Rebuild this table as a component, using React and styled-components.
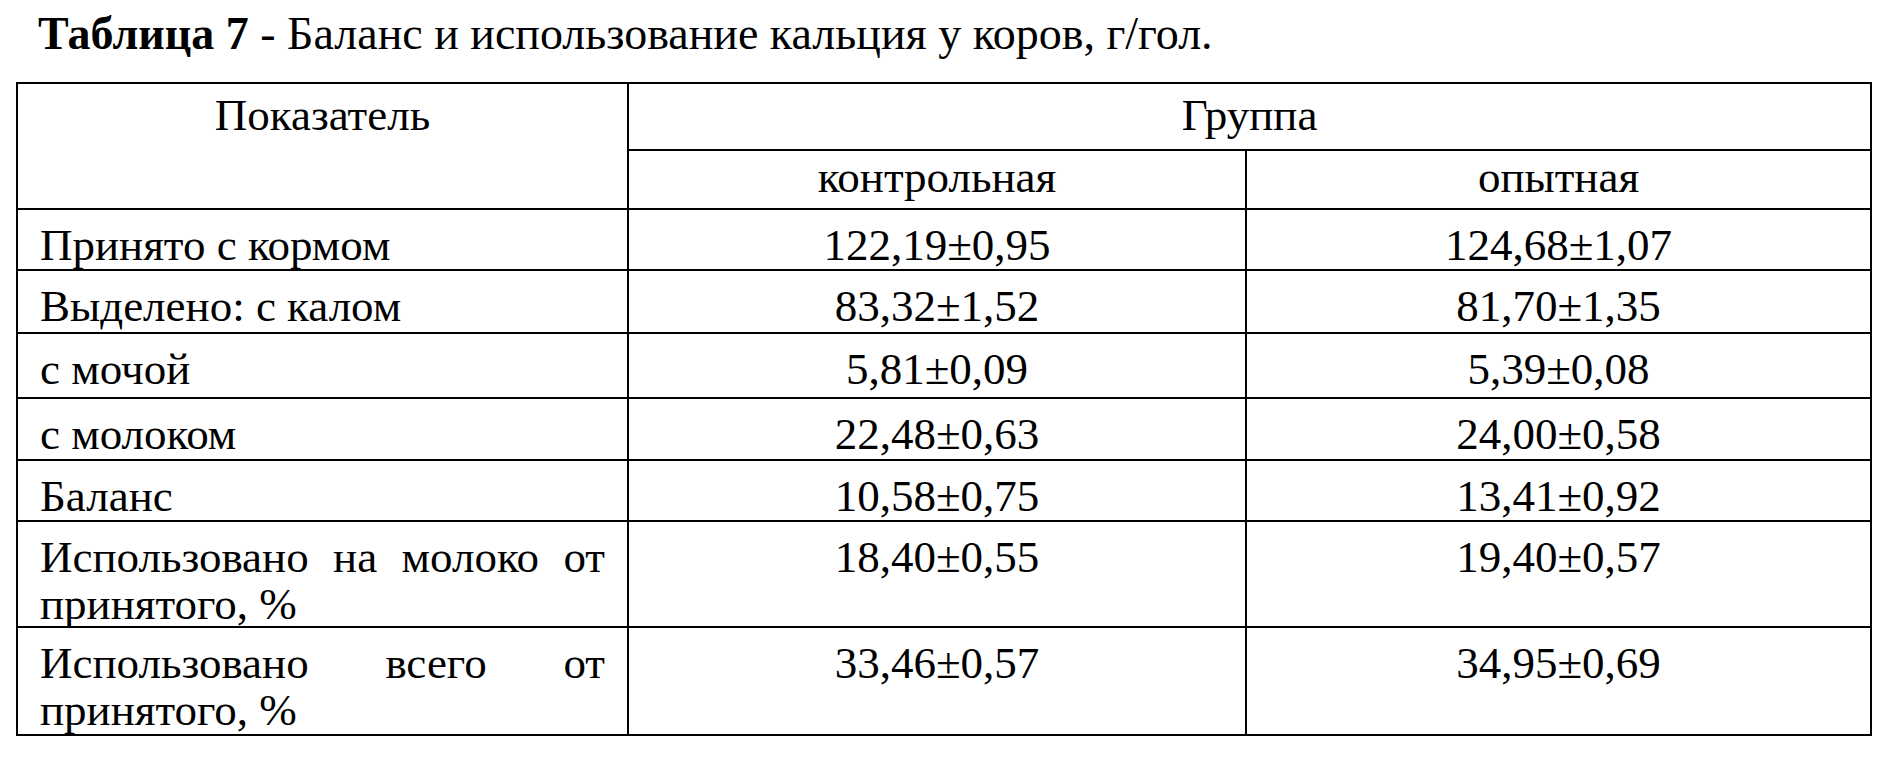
import React from 'react'
import styled, {createGlobalStyle} from 'styled-components'

const GlobalStyle = createGlobalStyle`
  html, body {
    margin: 0;
    padding: 0;
    background: #fff;
  }
  body {
    font-family: "Liberation Serif", "Times New Roman", serif;
    color: #000;
  }
`

const Page = styled.div`
  width: 1889px;
  height: 760px;
  padding: 0 17px 0 16px;
  box-sizing: border-box;
  background: #fff;
`

const Caption = styled.h1`
  margin: 0;
  padding: 10px 0 0 22px;
  height: 82px;
  box-sizing: border-box;
  font-size: 46px;
  line-height: 48px;
  font-weight: normal;
  white-space: nowrap;
`

const Bold = styled.b`
  font-weight: bold;
`

const Grid = styled.div`
  display: grid;
  grid-template-columns: 611px 618px 625px;
  grid-template-rows: 67px 59px 61px 63px 65px 62px 61px 106px 108px;
  border-top: 2px solid #000;
  border-left: 2px solid #000;
  font-size: 45px;
  line-height: 47px;
`

const Cell = styled.div`
  box-sizing: border-box;
  border-right: 2px solid #000;
  border-bottom: 2px solid #000;
  padding: ${props => props.pad ?? 12}px 22px 0;
  text-align: ${props => props.align || 'left'};
  white-space: nowrap;
  grid-column: ${props => props.cols ? `span ${props.cols}` : 'auto'};
  grid-row: ${props => props.rows ? `span ${props.rows}` : 'auto'};
  ${props => props.justify && `
    white-space: normal;
    text-align: justify;
    text-align-last: left;
  `}
`

const HeadCell = styled(Cell)`
  text-align: center;
`

const rows = [
  {name: 'Принято с кормом', a: '122,19±0,95', b: '124,68±1,07'},
  {name: 'Выделено: с калом', a: '83,32±1,52', b: '81,70±1,35'},
  {name: 'с мочой', a: '5,81±0,09', b: '5,39±0,08'},
  {name: 'с молоком', a: '22,48±0,63', b: '24,00±0,58'},
  {name: 'Баланс', a: '10,58±0,75', b: '13,41±0,92'},
  {name: 'Использовано на молоко от принятого, %', a: '18,40±0,55', b: '19,40±0,57', justify: true},
  {name: 'Использовано всего от принятого, %', a: '33,46±0,57', b: '34,95±0,69', justify: true},
]

export default function App() {
  return (
    <>
      <GlobalStyle />
      <Page>
        <Caption>
          <Bold>Таблица 7</Bold> - Баланс и использование кальция у коров, г/гол.
        </Caption>
        <Grid>
          <HeadCell rows={2} pad={8}>Показатель</HeadCell>
          <HeadCell cols={2} pad={8}>Группа</HeadCell>
          <HeadCell pad={3}>контрольная</HeadCell>
          <HeadCell pad={3}>опытная</HeadCell>
          {rows.map((r, i) => (
            <React.Fragment key={i}>
              <Cell justify={r.justify}>{r.name}</Cell>
              <Cell align="center">{r.a}</Cell>
              <Cell align="center">{r.b}</Cell>
            </React.Fragment>
          ))}
        </Grid>
      </Page>
    </>
  )
}
